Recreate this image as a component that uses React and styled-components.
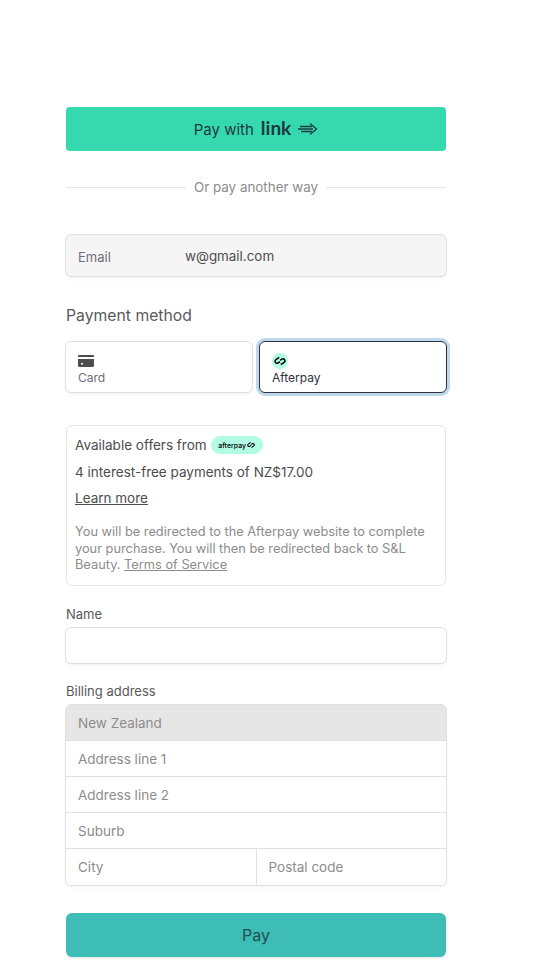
import React from "react";
import styled, { createGlobalStyle } from "styled-components";

const GlobalStyle = createGlobalStyle`
  html, body { margin: 0; padding: 0; background: #fff; }
  body { font-family: Inter, "Liberation Sans", sans-serif; color: #4d4d4d; }
`;

const Page = styled.div`
  width: 380px;
  padding: 107px 0 11px 66px;
`;

const LinkButton = styled.div`
  height: 44px;
  border-radius: 4px;
  background: #36d9ae;
  color: #1d3944;
  font-size: 15px;
  display: flex;
  align-items: center;
  justify-content: center;
`;

const LinkMark = styled.span`
  font-family: Lato, sans-serif;
  font-weight: 700;
  font-size: 19px;
  margin: -3px 0 0 7px;
`;

const ArrowIcon = styled.svg`
  width: 20px;
  height: 14px;
  margin-left: 7px;
`;

const Divider = styled.div`
  display: flex;
  align-items: center;
  gap: 8px;
  height: 20px;
  margin-top: 26px;
  color: #8c8c8c;
  font-size: 13.4px;
  &::before, &::after {
    content: "";
    flex: 1;
    height: 1px;
    background: #e6e6e6;
  }
`;

const EmailField = styled.div`
  display: flex;
  align-items: center;
  height: 43px;
  box-sizing: border-box;
  margin: 37px -1px 0;
  padding: 0 12px;
  border: 1px solid #e0e0e0;
  border-radius: 6px;
  background: #f5f5f5;
  box-shadow: 0 1px 1px rgba(0, 0, 0, 0.03), 0 3px 6px rgba(0, 0, 0, 0.02);
`;

const EmailLabel = styled.span`
  width: 107px;
  font-size: 13px;
  color: #6d6e78;
  margin-top: 3px;
`;

const EmailValue = styled.span`
  font-size: 13.4px;
  color: #4d4d4d;
`;

const SectionTitle = styled.div`
  margin-top: 29px;
  font-size: 15.75px;
  line-height: 20px;
  color: #595959;
`;

const Tabs = styled.div`
  display: grid;
  grid-template-columns: 188px 188px;
  gap: 6px;
  margin: 15px -1px 0;
`;

const Tab = styled.div`
  height: 52px;
  box-sizing: border-box;
  padding: 10px 12px 0;
  border-radius: 6px;
  background: #fff;
  border: 1px solid ${(p) => (p.$active ? "#30313d" : "#e0e0e0")};
  box-shadow: ${(p) =>
    p.$active
      ? "0 0 0 3px rgba(1, 104, 178, 0.25), 0 1px 1px rgba(0, 0, 0, 0.03)"
      : "0 1px 1px rgba(0, 0, 0, 0.03), 0 3px 6px rgba(0, 0, 0, 0.02)"};
  color: ${(p) => (p.$active ? "#30313d" : "#6d6e78")};
`;

const TabIcon = styled.div`
  height: 17px;
  display: flex;
  align-items: center;
`;

const TabLabel = styled.div`
  font-size: 12px;
  line-height: 15px;
  margin-top: 1px;
`;

const OfferBox = styled.div`
  box-sizing: border-box;
  height: 161px;
  margin-top: 32px;
  padding: 10px 8px 0;
  border: 1px solid #e6e6e6;
  border-radius: 6px;
  font-size: 13.5px;
`;

const OfferRow = styled.div`
  display: flex;
  align-items: center;
  gap: 4px;
  height: 18px;
  margin-top: ${(p) => p.$top || 0}px;
  color: #4d4d4d;
`;

const LearnLink = styled.span`
  text-decoration: underline;
  color: #4d4d4d;
`;

const AfterpayBadge = styled.div`
  width: 52px;
  height: 18px;
  border-radius: 9px;
  background: #b2fce4;
  display: flex;
  align-items: center;
  justify-content: center;
  gap: 1px;
  color: #000;
  font-size: 7px;
  font-weight: 500;
`;

const Notice = styled.div`
  margin-top: 17px;
  font-size: 12.8px;
  line-height: 16.5px;
  color: #8c8c8c;
  u { text-underline-offset: 1px; }
`;

const FieldLabel = styled.div`
  font-size: 13px;
  line-height: 16px;
  color: #595959;
  margin-top: ${(p) => p.$top}px;
`;

const NameInput = styled.div`
  height: 37px;
  box-sizing: border-box;
  margin: 5px -1px 0;
  border: 1px solid #e0e0e0;
  border-radius: 6px;
  background: #fff;
  box-shadow: 0 1px 1px rgba(0, 0, 0, 0.03), 0 3px 6px rgba(0, 0, 0, 0.02);
`;

const AddressGroup = styled.div`
  margin: 5px -1px 0;
  border: 1px solid #e0e0e0;
  border-radius: 6px;
  overflow: hidden;
  background: #fff;
  box-shadow: 0 1px 1px rgba(0, 0, 0, 0.03), 0 3px 6px rgba(0, 0, 0, 0.02);
`;

const AddressRow = styled.div`
  display: flex;
  height: 36px;
  box-sizing: border-box;
  border-bottom: ${(p) => (p.$last ? "0" : "1px solid #e0e0e0")};
  background: ${(p) => (p.$disabled ? "#e6e6e6" : "#fff")};
`;

const AddressCell = styled.div`
  flex: 1;
  display: flex;
  align-items: center;
  padding: 0 12px;
  font-size: 13.5px;
  color: #8c8c8c;
  & + & { border-left: 1px solid #e0e0e0; }
`;

const PayButton = styled.div`
  height: 44px;
  margin-top: 27px;
  border-radius: 6px;
  background: #3ebdb6;
  color: #1e4f4d;
  font-size: 16px;
  display: flex;
  align-items: center;
  justify-content: center;
  box-shadow: 0 1px 2px rgba(0, 0, 0, 0.12);
`;

function LoopIcon({ size = 10 }) {
  return (
    <svg width={size} height={size} viewBox="0 0 12 12" fill="none" stroke="#000" strokeWidth="1.5">
      <g transform="rotate(-35 6 6)">
        <path d="M7.5 2.5H3.5a2 2 0 0 0 0 4H5.5" />
        <path d="M4.5 9.5H8.5a2 2 0 0 0 0-4H6.5" />
      </g>
    </svg>
  );
}

function Address({ children, disabled, last }) {
  return (
    <AddressRow $disabled={disabled} $last={last}>
      {children}
    </AddressRow>
  );
}

export default function App() {
  return (
    <Page>
      <GlobalStyle />
      <LinkButton>
        Pay with
        <LinkMark>link</LinkMark>
        <ArrowIcon viewBox="0 0 20 14" fill="none" stroke="#1d3944" strokeWidth="1.3">
          <path d="M2 4.5h12M0 7h15M3 9.5h11M12 1.5 18.5 7 12 12.5" />
        </ArrowIcon>
      </LinkButton>
      <Divider>Or pay another way</Divider>
      <EmailField>
        <EmailLabel>Email</EmailLabel>
        <EmailValue>w@gmail.com</EmailValue>
      </EmailField>
      <SectionTitle>Payment method</SectionTitle>
      <Tabs>
        <Tab>
          <TabIcon>
            <svg width="16" height="12" viewBox="0 0 16 12">
              <path fill="#4d4d4d" d="M0 1.2C0 .5.5 0 1.2 0h13.6c.7 0 1.2.5 1.2 1.2V2H0zM0 4h16v6.8c0 .7-.5 1.2-1.2 1.2H1.2C.5 12 0 11.5 0 10.8z" />
              <rect x="3" y="8" width="2" height="1.5" fill="#fff" />
            </svg>
          </TabIcon>
          <TabLabel>Card</TabLabel>
        </Tab>
        <Tab $active>
          <TabIcon>
            <svg width="16" height="16" viewBox="0 0 16 16">
              <circle cx="8" cy="8" r="8" fill="#b2fce4" />
              <g transform="translate(2 2)">
                <LoopIcon size={12} />
              </g>
            </svg>
          </TabIcon>
          <TabLabel>Afterpay</TabLabel>
        </Tab>
      </Tabs>
      <OfferBox>
        <OfferRow>
          Available offers from
          <AfterpayBadge>
            afterpay
            <LoopIcon size={8} />
          </AfterpayBadge>
        </OfferRow>
        <OfferRow $top={9}>4 interest-free payments of NZ$17.00</OfferRow>
        <OfferRow $top={8}>
          <LearnLink>Learn more</LearnLink>
        </OfferRow>
        <Notice>
          You will be redirected to the Afterpay website to complete your purchase. You will then be redirected back to S&amp;L
          Beauty. <u>Terms of Service</u>
        </Notice>
      </OfferBox>
      <FieldLabel $top={20}>Name</FieldLabel>
      <NameInput />
      <FieldLabel $top={19}>Billing address</FieldLabel>
      <AddressGroup>
        <Address disabled>
          <AddressCell>New Zealand</AddressCell>
        </Address>
        <Address>
          <AddressCell>Address line 1</AddressCell>
        </Address>
        <Address>
          <AddressCell>Address line 2</AddressCell>
        </Address>
        <Address>
          <AddressCell>Suburb</AddressCell>
        </Address>
        <Address last>
          <AddressCell>City</AddressCell>
          <AddressCell>Postal code</AddressCell>
        </Address>
      </AddressGroup>
      <PayButton>Pay</PayButton>
    </Page>
  );
}
